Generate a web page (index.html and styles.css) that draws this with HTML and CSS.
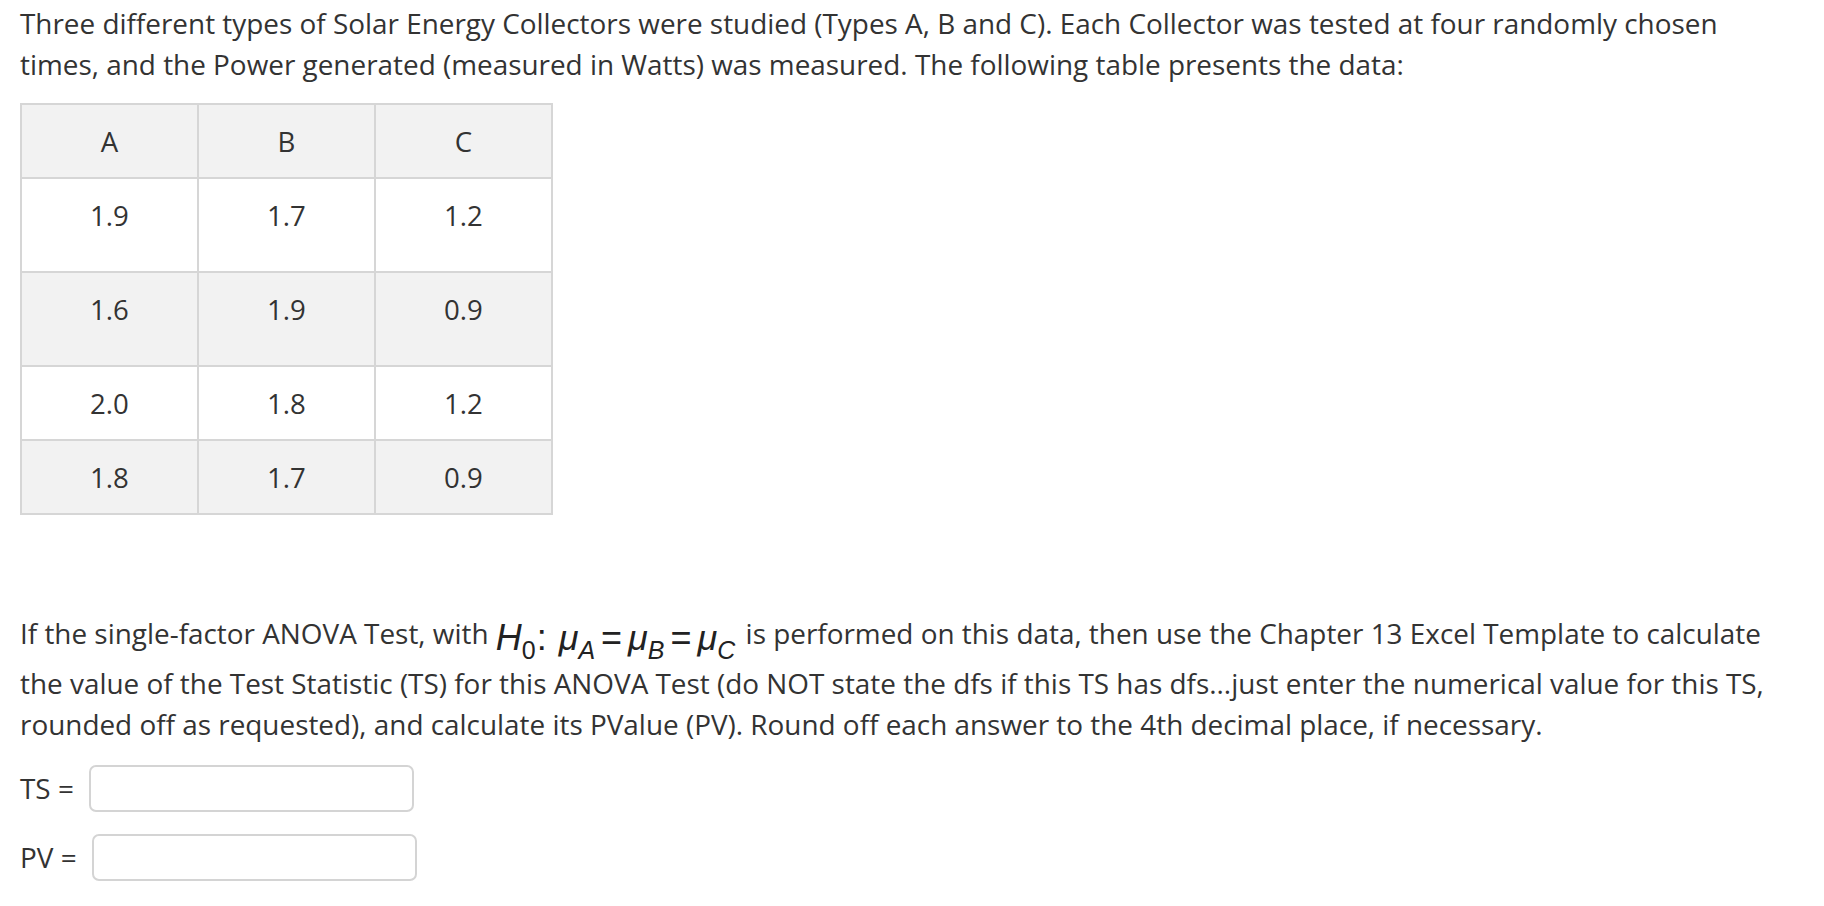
FILE: index.html
```html
<!DOCTYPE html>
<html lang="en">
<head>
<meta charset="utf-8">
<title>ANOVA question</title>
<link rel="stylesheet" href="styles.css">
</head>
<body>
<div class="question">
  <p class="intro">Three different types of Solar Energy Collectors were studied (Types A, B and C). Each Collector was tested at four randomly chosen times, and the Power generated (measured in Watts) was measured. The following table presents the data:</p>
  <table class="data">
    <thead>
      <tr><th>A</th><th>B</th><th>C</th></tr>
    </thead>
    <tbody>
      <tr class="tall"><td>1.9</td><td>1.7</td><td>1.2</td></tr>
      <tr class="tall alt"><td>1.6</td><td>1.9</td><td>0.9</td></tr>
      <tr><td>2.0</td><td>1.8</td><td>1.2</td></tr>
      <tr class="alt"><td>1.8</td><td>1.7</td><td>0.9</td></tr>
    </tbody>
  </table>
  <p class="task">If the single-factor ANOVA Test, with <span class="math"><span class="mi">H</span><span class="sub">0</span><span class="mo">:</span><span class="mi">μ</span><span class="sub it">A</span><span class="eq">=</span><span class="mi">μ</span><span class="sub it">B</span><span class="eq">=</span><span class="mi">μ</span><span class="sub it">C</span></span> is performed on this data, then use the Chapter 13 Excel Template to calculate the value of the Test Statistic (TS) for this ANOVA Test (do NOT state the dfs if this TS has dfs...just enter the numerical value for this TS, rounded off as requested), and calculate its PValue (PV). Round off each answer to the 4th decimal place, if necessary.</p>
  <div class="answer">
    <label class="label" for="ts">TS =</label>
    <input class="field" id="ts" type="text">
  </div>
  <div class="answer">
    <label class="label" for="pv">PV =</label>
    <input class="field" id="pv" type="text">
  </div>
</div>
</body>
</html>
```
FILE: styles.css
```css
html, body {
  margin: 0;
  padding: 0;
  background: #ffffff;
}

body {
  font-family: "Open Sans", "Liberation Sans", sans-serif;
  font-size: 27.9px;
  line-height: 40.7px;
  color: #333333;
}

.question {
  padding: 3px 39px 0 20px;
}

.intro {
  margin: 0 0 19px 0;
}

.data {
  border-collapse: collapse;
  border: 2px solid #d6d6d6;
  font-size: 27.6px;
  line-height: 40px;
}

.data th,
.data td {
  width: 175px;
  border: 2px solid #d6d6d6;
  text-align: center;
  font-weight: 400;
  padding: 16px 0 16px 0;
}

.data thead tr {
  background: #f2f2f2;
}

.data tbody tr.alt {
  background: #f2f2f2;
}

.data tr.tall td {
  padding-bottom: 36px;
}

.task {
  margin: 98px 0 20px 0;
}

.math {
  display: inline-block;
  font-family: "Liberation Sans", Arial, sans-serif;
  font-size: 36px;
  line-height: 44px;
  color: #222222;
  white-space: nowrap;
  vertical-align: -6px;
  margin-right: 3px;
}

.mi {
  font-style: italic;
}

.mo {
  margin: 0 12px 0 1px;
}

.eq {
  margin: 0 6px;
}

.sub {
  display: inline-block;
  font-size: 25px;
  line-height: 25px;
  vertical-align: -9px;
}

.sub.it {
  font-style: italic;
}

.answer {
  display: flex;
  align-items: center;
  gap: 15px;
  margin-bottom: 22px;
}

.label {
  line-height: 40px;
}

.field {
  width: 325px;
  height: 47px;
  box-sizing: border-box;
  border: 2px solid #d4d4d4;
  border-radius: 7px;
  background: #ffffff;
  padding: 0 10px;
  font: inherit;
}
```
